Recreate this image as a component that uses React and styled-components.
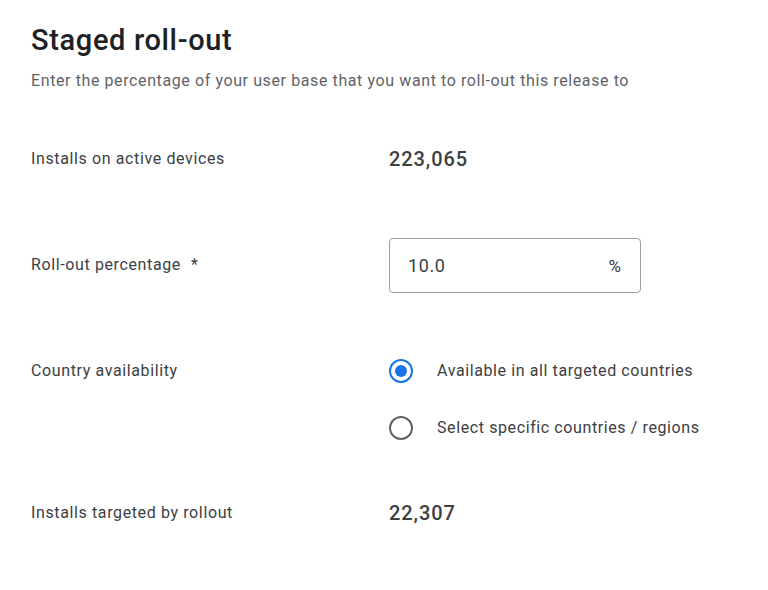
import styled, { createGlobalStyle } from 'styled-components';
import { useState } from 'react';

const GlobalStyle = createGlobalStyle`
	body {
		margin: 0;
		background: #ffffff;
		font-family: Roboto, 'Liberation Sans', sans-serif;
		color: #3c4043;
	}
`;

const Page = styled.main`
	padding: 22px 31px 0 31px;
`;

const Title = styled.h1`
	margin: 0;
	font-size: 29px;
	font-weight: 500;
	line-height: 36px;
	color: #202124;
	letter-spacing: 0.65px;
`;

const Subtitle = styled.p`
	margin: 13px 0 0 0;
	font-size: 16px;
	line-height: 20px;
	color: #5f6368;
	letter-spacing: 0.6px;
`;

const Form = styled.div`
	display: grid;
	grid-template-columns: 358px 1fr;
	margin-top: ${(p) => p.$top}px;
`;

const Row = styled.div`
	display: contents;
`;

const Label = styled.div`
	font-size: 16px;
	line-height: 20px;
	color: #3c4043;
	padding-top: ${(p) => p.$pad || 0}px;
	margin-bottom: ${(p) => p.$gap}px;
	letter-spacing: 0.62px;
`;

const Value = styled.div`
	font-size: 20px;
	font-weight: 500;
	line-height: 20px;
	color: #3c4043;
	letter-spacing: 0.9px;
	margin-bottom: ${(p) => p.$gap}px;
`;

const Required = styled.span`
	margin-left: 10px;
`;

const InputBox = styled.label`
	display: flex;
	align-items: center;
	box-sizing: border-box;
	width: 252px;
	height: 55px;
	padding: 0 19px 0 18px;
	border: 1px solid #9aa0a6;
	border-radius: 4px;
	margin-bottom: ${(p) => p.$gap}px;
`;

const Input = styled.input`
	flex: 1;
	min-width: 0;
	border: none;
	outline: none;
	padding: 0;
	font-family: inherit;
	font-size: 18px;
	letter-spacing: 0.6px;
	color: #3c4043;
	background: transparent;
`;

const Suffix = styled.span`
	font-size: 17px;
	color: #3c4043;
`;

const RadioGroup = styled.div`
	display: flex;
	flex-direction: column;
	gap: 33px;
	margin-bottom: ${(p) => p.$gap}px;
`;

const RadioOption = styled.label`
	display: flex;
	align-items: center;
	gap: 24px;
	font-size: 16px;
	line-height: 24px;
	color: #3c4043;
	cursor: pointer;
	letter-spacing: 0.6px;
`;

const RadioCircle = styled.span`
	box-sizing: border-box;
	width: 24px;
	height: 24px;
	border-radius: 50%;
	border: 2px solid ${(p) => (p.$checked ? '#1a73e8' : '#5f6368')};
	display: flex;
	align-items: center;
	justify-content: center;
	&::after {
		content: '';
		width: 12px;
		height: 12px;
		border-radius: 50%;
		background: ${(p) => (p.$checked ? '#1a73e8' : 'transparent')};
	}
`;

const options = ['Available in all targeted countries', 'Select specific countries / regions'];

export default function App() {
	const [pct, setPct] = useState('10.0');
	const [choice, setChoice] = useState(0);

	return (
		<>
			<GlobalStyle />
			<Page>
				<Title>Staged roll-out</Title>
				<Subtitle>Enter the percentage of your user base that you want to roll-out this release to</Subtitle>
				<Form $top={58}>
					<Row>
						<Label $gap={69}>Installs on active devices</Label>
						<Value $gap={69}>223,065</Value>
					</Row>
					<Row>
						<Label $pad={17} $gap={66}>
							Roll-out percentage<Required>*</Required>
						</Label>
						<InputBox $gap={66}>
							<Input value={pct} onChange={(e) => setPct(e.target.value)} />
							<Suffix>%</Suffix>
						</InputBox>
					</Row>
					<Row>
						<Label $pad={2} $gap={63}>Country availability</Label>
						<RadioGroup $gap={63}>
							{options.map((opt, i) => (
								<RadioOption key={opt} onClick={() => setChoice(i)}>
									<RadioCircle $checked={choice === i} />
									{opt}
								</RadioOption>
							))}
						</RadioGroup>
					</Row>
					<Row>
						<Label $gap={0}>Installs targeted by rollout</Label>
						<Value $gap={0}>22,307</Value>
					</Row>
				</Form>
			</Page>
		</>
	);
}
